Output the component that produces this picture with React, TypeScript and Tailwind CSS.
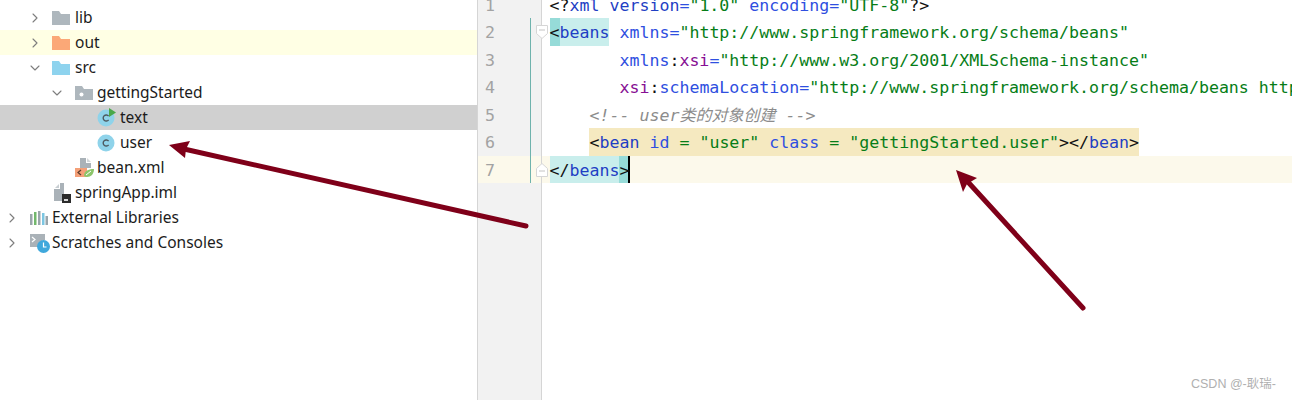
import { ChevronDown, ChevronRight } from "lucide-react";
import type { ReactNode } from "react";

function Folder({ color, dot }: { color: string; dot?: boolean }) {
  return (
    <svg width="18" height="14" viewBox="0 0 18 14" className={`shrink-0 ${dot ? "" : "-ml-[1px] mr-[1px]"}`}>
      <path d="M0 0h7l2 3h9v11H0z" fill={color} />
      {dot && <circle cx="6.500" cy="8.500" r="2" fill="#fff" />}
    </svg>
  );
}

function ClassIcon({ run }: { run?: boolean }) {
  return (
    <svg width="19" height="19" viewBox="0 0 19 19" className="shrink-0">
      <circle cx="9" cy="10" r="8.500" fill="#8fd3ea" />
      <path d="M11.600 8.200a3 3 0 1 0 0 3.600" fill="none" stroke="#4d5a60" strokeWidth="1.4" />
      {run && <path d="M12 0l7 4.500-7 4.500z" fill="#49a84a" />}
    </svg>
  );
}

function XmlIcon() {
  return (
    <svg width="20" height="20" viewBox="0 0 20 20" className="-mr-[2px] shrink-0">
      <path d="M5 0h6v5h5v5H5z" fill="#aab2b8" />
      <path d="M12 0l4 4h-4z" fill="#d3d7da" />
      <rect x="0" y="10" width="12" height="9" fill="#f4a078" />
      <path d="M6 12l-3 2.500 3 2.500" fill="none" stroke="#5a3a2a" strokeWidth="1.2" />
      <path d="M9 18c0-5 4-7 10-7 0 5-3 8-7 8-1 0-2-.3-3-1z" fill="#8cc56a" />
      <path d="M11 17l5-4" stroke="#fff" strokeWidth="1" />
    </svg>
  );
}

function ImlIcon() {
  return (
    <svg width="18" height="20" viewBox="0 0 18 20" className="shrink-0">
      <path d="M1 6h6V0h4v18H1z" fill="#aab2b8" />
      <path d="M2 5l4-4v4z" fill="#c8ced2" />
      <rect x="9" y="11" width="9" height="9" fill="#2b2b2b" />
      <rect x="11" y="16" width="4" height="2" fill="#d8d8d8" />
    </svg>
  );
}

function LibrariesIcon() {
  return (
    <svg width="18" height="14" viewBox="0 0 18 14" className="shrink-0">
      <rect x="0" y="3" width="2.500" height="11" fill="#9aa5ab" />
      <rect x="4" y="1" width="2.500" height="13" fill="#72b76d" />
      <rect x="8" y="0" width="2.500" height="14" fill="#9aa5ab" />
      <rect x="12" y="2" width="2.500" height="12" fill="#7cc6e2" />
      <rect x="15.500" y="5" width="2.500" height="9" fill="#9aa5ab" />
    </svg>
  );
}

function ScratchIcon() {
  return (
    <svg width="20" height="20" viewBox="0 0 20 20" className="-mr-[2px] shrink-0">
      <path d="M0 1h15v6a7 7 0 0 0-7 7H0z" fill="#aab2b8" />
      <path d="M2 4l3 2.500L2 9" fill="none" stroke="#fff" strokeWidth="1.2" />
      <circle cx="13.500" cy="13.500" r="6.500" fill="#3fa8dc" />
      <path d="M13.500 9.500v4.500h3" fill="none" stroke="#fff" strokeWidth="1.2" />
    </svg>
  );
}

interface TreeRow {
  label: string;
  pad: string;
  icon: ReactNode;
  arrow?: "right" | "down";
  bg?: string;
}

const ROWS: TreeRow[] = [
  { label: "lib", pad: "pl-[27px]", arrow: "right", icon: <Folder color="#aeb7bd" /> },
  { label: "out", pad: "pl-[27px]", arrow: "right", icon: <Folder color="#fba877" />, bg: "bg-[#ffffe4]" },
  { label: "src", pad: "pl-[27px]", arrow: "down", icon: <Folder color="#8ed3ee" /> },
  { label: "gettingStarted", pad: "pl-[49px]", arrow: "down", icon: <Folder color="#aeb7bd" dot /> },
  { label: "text", pad: "pl-[97px]", icon: <ClassIcon run />, bg: "bg-[#d0d0d0]" },
  { label: "user", pad: "pl-[97px]", icon: <ClassIcon /> },
  { label: "bean.xml", pad: "pl-[75px]", icon: <XmlIcon /> },
  { label: "springApp.iml", pad: "pl-[53px]", icon: <ImlIcon /> },
  { label: "External Libraries", pad: "pl-[4px]", arrow: "right", icon: <LibrariesIcon /> },
  { label: "Scratches and Consoles", pad: "pl-[4px]", arrow: "right", icon: <ScratchIcon /> },
];

const TAG = "text-[#1f3fc4]";
const ATTR = "text-[#2f4fe0]";
const NS = "text-[#871094]";
const STR = "text-[#067d17]";

function FoldMark({ open }: { open?: boolean }) {
  return (
    <svg width="12" height="14" viewBox="0 0 12 14" className="absolute left-[58px] top-[7px]">
      <path
        d={open ? "M.5.5h11v8l-5.500 5-5.500-5z" : "M.5 13.500h11v-8l-5.500-5-5.500 5z"}
        fill="#fff"
        stroke="#d6d6d6"
      />
      <path d={open ? "M3 5h6" : "M3 8h6"} stroke="#c4c4c4" />
    </svg>
  );
}

function CodeRow({ n, children, active, fold }: { n: number; children?: ReactNode; active?: boolean; fold?: "open" | "close" }) {
  return (
    <div className={`flex h-[27.5px] shrink-0 leading-[29px] ${active ? "bg-[#fcf9eb]" : ""}`}>
      <div className={`relative flex w-[64px] shrink-0 border-r border-[#d5d5d5] ${active ? "" : "bg-[#f2f2f2]"}`}>
        <span className="w-[52px] pl-[7px] text-[#a3a3a3]">{n}</span>
        {n >= 2 && <span className="w-px bg-[#6fb3ad]" />}
        {fold && <FoldMark open={fold === "open"} />}
      </div>
      <div className="whitespace-pre pl-[7.5px]">{children}</div>
    </div>
  );
}

export default function App() {
  return (
    <div className="relative flex h-[400px] w-[1292px] overflow-hidden bg-white">
      {/* project tree */}
      <div className="w-[477px] shrink-0 pt-[5px] font-['Noto_Sans',sans-serif] text-[15.5px] text-[#1c1c1c]">
        {ROWS.map((row) => (
          <div key={row.label} className={`flex h-[25px] items-center ${row.pad} ${row.bg ?? ""}`}>
            {row.arrow === "right" && <ChevronRight size={16} strokeWidth={1.6} className="mr-[10px] shrink-0 text-[#7d7d7d]" />}
            {row.arrow === "down" && <ChevronDown size={16} strokeWidth={1.6} className="mr-[10px] shrink-0 text-[#7d7d7d]" />}
            {row.icon}
            <span className="ml-[4px] whitespace-nowrap">{row.label}</span>
          </div>
        ))}
      </div>

      {/* editor */}
      <div className="flex h-[400px] flex-1 flex-col overflow-hidden border-l border-[#d5d5d5] font-['DejaVu_Sans_Mono','Noto_Sans_CJK_SC',monospace] text-[16.6px] text-[#111]">
        <div className="-mt-[9.5px]" />
        <CodeRow n={1}>
          {"<?"}
          <span className={TAG}>xml version</span>
          <span className={ATTR}>=</span>
          <span className={STR}>"1.0"</span> <span className={ATTR}>encoding=</span>
          <span className={STR}>"UTF-8"</span>
          {"?>"}
        </CodeRow>
        <CodeRow n={2} fold="open">
          <span className="inline-block h-[27.5px] bg-[#96dbd8]">{"<"}</span>
          <span className={`inline-block h-[27.5px] bg-[#c9eeec] ${TAG}`}>beans</span> <span className={ATTR}>xmlns=</span>
          <span className={STR}>"http://www.springframework.org/schema/beans"</span>
        </CodeRow>
        <CodeRow n={3}>
          {"       "}
          <span className={ATTR}>xmlns</span>:<span className={NS}>xsi</span>
          <span className={ATTR}>=</span>
          <span className={STR}>"http://www.w3.org/2001/XMLSchema-instance"</span>
        </CodeRow>
        <CodeRow n={4}>
          {"       "}
          <span className={NS}>xsi</span>:<span className={ATTR}>schemaLocation=</span>
          <span className={STR}>"http://www.springframework.org/schema/beans http://www.springframework.org/schema/beans/spring-beans.xsd"</span>
        </CodeRow>
        <CodeRow n={5}>
          {"    "}
          <span className="italic text-[#8c8c8c]">
            {"<!-- user"}
            <span className="text-[16px]">类的对象创建</span>
            {" -->"}
          </span>
        </CodeRow>
        <CodeRow n={6}>
          {"    "}
          <span className="inline-block h-[27.5px] bg-[#f5e9c0]">
            {"<"}
            <span className={TAG}>bean</span> <span className={ATTR}>id</span> <span className={STR}>= "user"</span>{" "}
            <span className={ATTR}>class</span> <span className={STR}>= "gettingStarted.user"</span>
            {"></"}
            <span className={TAG}>bean</span>
            {">"}
          </span>
        </CodeRow>
        <CodeRow n={7} active fold="close">
          <span className="inline-block h-[27.5px] bg-[#c9eeec]">
            {"</"}
            <span className={TAG}>beans</span>
          </span>
          <span className="inline-block h-[27.5px] w-[11px] border-r-2 border-black bg-[#96dbd8]">{">"}</span>
        </CodeRow>
        <div className="flex-1">
          <div className="h-full w-[64px] border-r border-[#d5d5d5] bg-[#f2f2f2]" />
        </div>
      </div>

      {/* annotation arrows */}
      <svg width="1292" height="400" viewBox="0 0 1292 400" className="pointer-events-none absolute inset-0">
        <path d="M526 226L184 149" stroke="#7f0019" strokeWidth="5" strokeLinecap="round" />
        <path d="M169 145L190 141L186 149L185 158z" fill="#7f0019" />
        <path d="M1083 308L968 182" stroke="#7f0019" strokeWidth="5" strokeLinecap="round" />
        <path d="M956 170L977 178L967 184L963 192z" fill="#7f0019" />
      </svg>

      <span className="absolute left-[1191px] top-[375px] font-['Liberation_Sans','Noto_Sans_CJK_SC',sans-serif] text-[12.5px] text-[#b0b0b0]">
        CSDN @-耿瑞-
      </span>
    </div>
  );
}
